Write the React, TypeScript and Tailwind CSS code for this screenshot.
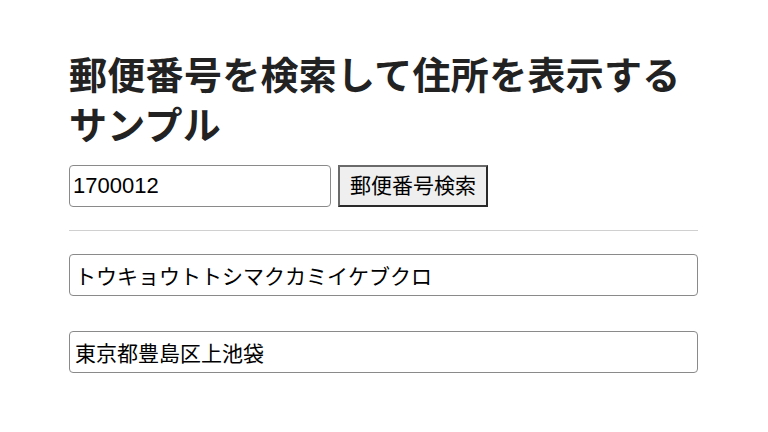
import { useState } from "react";

const font = "font-['Liberation_Sans','Noto_Sans_CJK_JP',sans-serif]";

export default function App() {
  const [zip, setZip] = useState("1700012");
  const [kana] = useState("トウキョウトトシマクカミイケブクロ");
  const [address] = useState("東京都豊島区上池袋");

  return (
    <div className={`min-h-screen bg-white text-[#222] ${font}`}>
      <div className="w-[629px] ml-[69px] pt-[51px]">
        {/* Heading */}
        <h1 className="text-[38px] leading-[50px] font-semibold tracking-[0.3px] text-[#222]">
          郵便番号を検索して住所を表示するサンプル
        </h1>

        {/* Search row */}
        <div className="flex items-center gap-[7px] mt-[14px]">
          <input
            type="text"
            value={zip}
            onChange={(e) => setZip(e.target.value)}
            className="w-[262px] h-[42px] px-[3px] text-[22px] text-black border-[1.5px] border-[#8a8a8a] rounded-[4px] outline-none"
          />
          <button className="h-[42px] px-[10px] text-[21px] text-black bg-[#efefef] border-2 border-[#6a6a6a] border-r-[#2a2a2a] border-b-[#2a2a2a]">
            郵便番号検索
          </button>
        </div>

        <hr className="mt-[23px] border-t-[1.5px] border-[#d0d0d0]" />

        {/* Results */}
        <div className="mt-[23px] flex flex-col gap-[35px]">
          <input
            type="text"
            value={kana}
            readOnly
            className="w-full h-[42px] px-[5px] text-[21px] text-black border-[1.5px] border-[#8a8a8a] rounded-[4px] outline-none"
          />
          <input
            type="text"
            value={address}
            readOnly
            className="w-full h-[42px] px-[5px] text-[21px] text-black border-[1.5px] border-[#8a8a8a] rounded-[4px] outline-none"
          />
        </div>
      </div>
    </div>
  );
}
